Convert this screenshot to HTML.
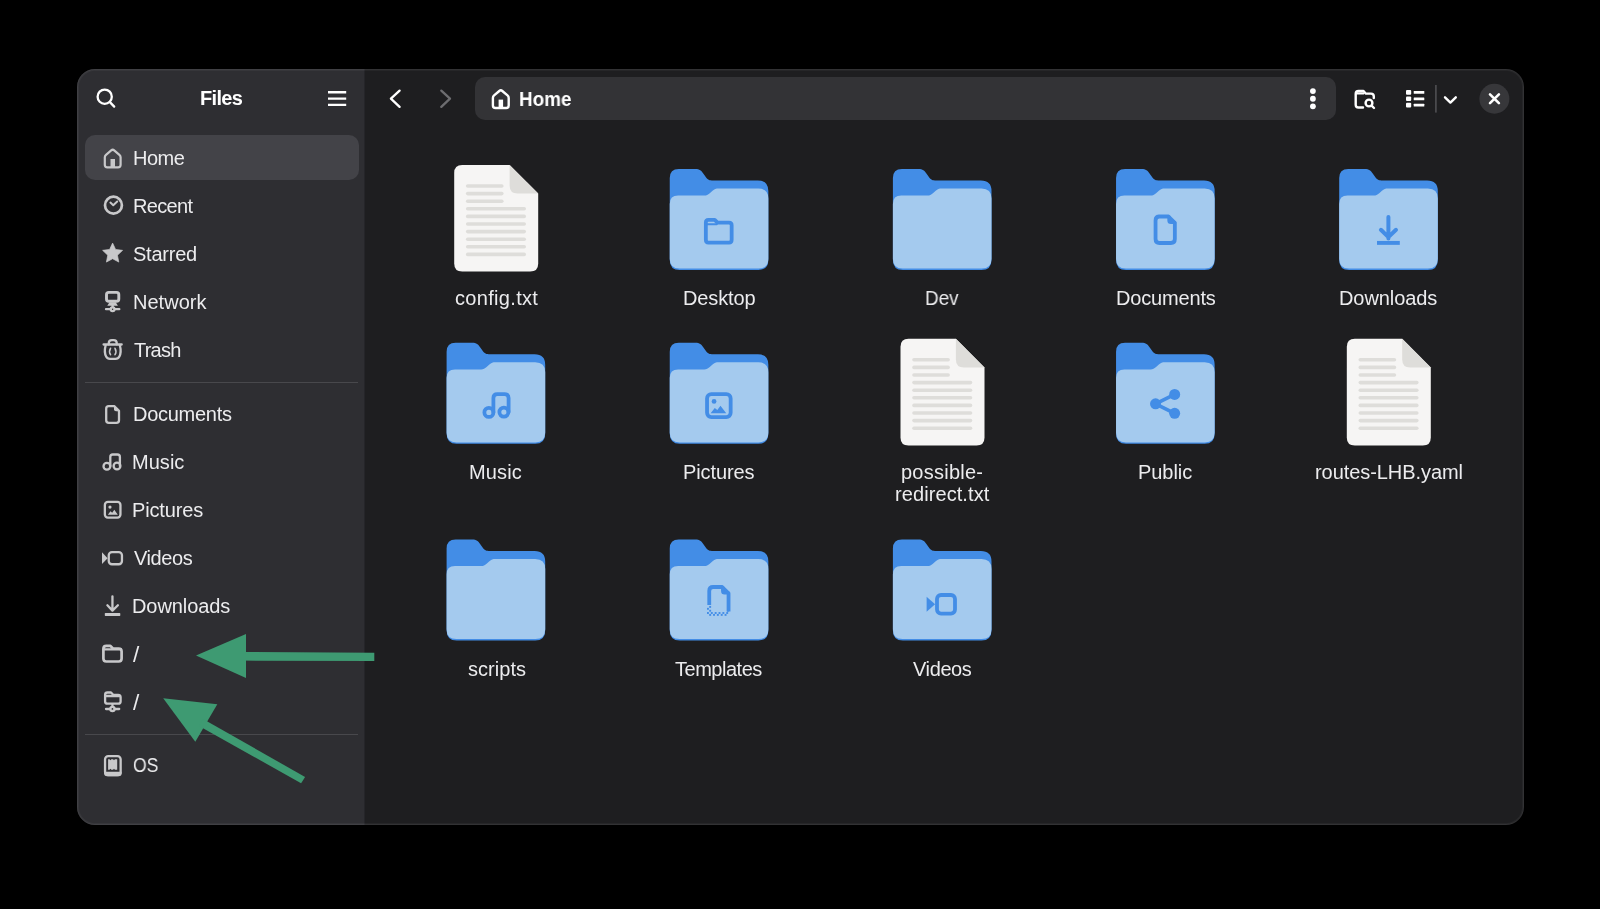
<!DOCTYPE html><html><head><meta charset="utf-8"><style>
html,body{margin:0;padding:0;background:#000;width:1600px;height:909px;overflow:hidden;}.t{position:absolute;white-space:nowrap;line-height:1;font-family:"Liberation Sans", sans-serif;will-change:transform;}.abs{position:absolute;}
</style></head><body>
<div class="abs" style="left:77px;top:69px;width:1447px;height:756px;border-radius:18px;overflow:hidden;background:#1e1e20;"><div class="abs" style="left:0;top:0;width:288px;height:756px;background:#2e2e32;"></div></div>
<div class="abs" style="left:85px;top:135.3px;width:273.5px;height:45.2px;border-radius:10px;background:#434348;"></div>
<div class="abs" style="left:364px;top:69px;width:1px;height:756px;background:rgba(0,0,0,0.18);"></div>
<div class="abs" style="left:474.5px;top:77px;width:861px;height:43px;border-radius:10px;background:#333336;"></div>
<div class="abs" style="left:85px;top:382px;width:273px;height:1px;background:#48484c;"></div>
<div class="abs" style="left:85px;top:734px;width:273px;height:1px;background:#48484c;"></div>
<div class="abs" style="left:77px;top:69px;width:1445px;height:754px;border-radius:18px;border:1px solid rgba(255,255,255,0.09);box-shadow:inset 0 0 0 1px rgba(255,255,255,0.04);"></div>
<svg class="abs" style="left:0;top:0" width="1600" height="909" viewBox="0 0 1600 909">
<g fill="none" stroke="#ffffff" stroke-width="2.3" stroke-linecap="round"><circle cx="104.7" cy="96.7" r="7.1"/><path d="M109.9 102.1 L114.2 106.6"/></g><g stroke="#ffffff" stroke-width="2.4" stroke-linecap="butt"><path d="M328 92.3 H346.2 M328 98.6 H346.2 M328 104.9 H346.2"/></g><path d="M399.6 90.6 L390.9 98.7 L399.6 106.9" fill="none" stroke="#ffffff" stroke-width="2.3" stroke-linecap="round" stroke-linejoin="round"/><path d="M441.3 90.6 L450 98.7 L441.3 106.9" fill="none" stroke="#6d6d70" stroke-width="2.3" stroke-linecap="round" stroke-linejoin="round"/><g transform="translate(491.8,88.6) scale(1.0)"><path d="M1.1 9.3 Q1.1 7.8 2.3 6.8 L7.5 2.4 Q9 1.1 10.5 2.4 L15.7 6.8 Q16.9 7.8 16.9 9.3 V16.8 Q16.9 19.4 14.3 19.4 H3.7 Q1.1 19.4 1.1 16.8 Z" fill="none" stroke="#ffffff" stroke-width="2.4" stroke-linejoin="round"/><rect x="6.8" y="11" width="4.5" height="9" fill="#ffffff"/></g><g fill="#ffffff"><circle cx="1312.9" cy="91.1" r="2.9"/><circle cx="1312.9" cy="98.75" r="2.9"/><circle cx="1312.9" cy="106.35" r="2.9"/></g><g fill="none" stroke="#ffffff" stroke-width="2.4" stroke-linecap="round" stroke-linejoin="round"><path d="M1363 107.5 H1358.5 Q1355.7 107.5 1355.7 104.7 V93.8 Q1355.7 91 1358.5 91 H1363.5 L1365.6 93.6 H1371 Q1373.8 93.6 1373.8 96.4 V98"/><path d="M1356.5 93.4 H1363"/><circle cx="1369" cy="103" r="3.4"/><path d="M1371.6 105.6 L1374 108"/></g><g fill="#ffffff"><rect x="1406" y="90" width="5.2" height="4.7" rx="1"/><rect x="1406" y="96.4" width="5.2" height="4.7" rx="1"/><rect x="1406" y="102.8" width="5.2" height="4.7" rx="1"/><rect x="1413.7" y="91" width="10.6" height="2.8" rx="0.5"/><rect x="1413.7" y="97.4" width="10.6" height="2.8" rx="0.5"/><rect x="1413.7" y="103.8" width="10.6" height="2.8" rx="0.5"/></g><rect x="1435" y="85" width="1.8" height="27.6" fill="#4a4a4d"/><path d="M1445 97.3 L1450.4 102.6 L1455.8 97.3" fill="none" stroke="#ffffff" stroke-width="2.4" stroke-linecap="round" stroke-linejoin="round"/><circle cx="1494.4" cy="98.75" r="15" fill="#37373a"/><path d="M1490 94.3 L1498.9 103.2 M1498.9 94.3 L1490 103.2" stroke="#ffffff" stroke-width="2.6" stroke-linecap="round"/><g transform="translate(103.7,148.0) scale(1.0)"><path d="M1.1 9.3 Q1.1 7.8 2.3 6.8 L7.5 2.4 Q9 1.1 10.5 2.4 L15.7 6.8 Q16.9 7.8 16.9 9.3 V16.8 Q16.9 19.4 14.3 19.4 H3.7 Q1.1 19.4 1.1 16.8 Z" fill="none" stroke="#c8c8ca" stroke-width="2.2" stroke-linejoin="round"/><rect x="6.8" y="11" width="4.5" height="9" fill="#c8c8ca"/></g><g fill="none" stroke="#c8c8ca" stroke-width="2.3" stroke-linecap="round" stroke-linejoin="round"><circle cx="113.45" cy="205.15" r="8.45" stroke-width="2.7"/><path d="M110.4 202.6 L113.25 205.2 L117.2 201.5" stroke-width="2"/><rect x="106.5" y="292.4" width="12.3" height="8.8" rx="2.3" stroke-width="2.9"/><path d="M106 309.2 H110.3 M114.9 309.2 H119.3 M112.6 305 V307"/><circle cx="112.6" cy="309.3" r="1.9"/><path d="M103.6 344.5 H121.7"/><path d="M108.75 344.3 V343.2 Q108.75 340.05 111.9 340.05 H113.6 Q116.75 340.05 116.75 343.2 V344.3"/><path d="M105.6 345.5 C104.7 349 104.8 354 106.1 356.5 Q107.3 358.85 110 358.85 H115.5 Q118.2 358.85 119.4 356.5 C120.7 354 120.8 349 119.9 345.5"/><path d="M108.8 406.1 H114.2 L119 410.9 V420.2 Q119 422.8 116.4 422.8 H108.8 Q106.2 422.8 106.2 420.2 V408.7 Q106.2 406.1 108.8 406.1 Z"/><circle cx="106.9" cy="466.2" r="3.4"/><circle cx="117" cy="466" r="3.4"/><path d="M110.3 466 V457 Q110.3 454.5 112.8 454.5 H117.4 Q119.9 454.5 119.9 457 V466"/><rect x="104.85" y="501.95" width="15.6" height="15.6" rx="3"/><rect x="108.75" y="552.15" width="13.2" height="12.1" rx="3.2"/><path d="M112.45 596.3 V610 M107.4 605.3 L112.45 610.6 L117.9 605.3"/><path d="M103.4 658.6 V648.7 Q103.4 645.8 106.3 645.8 H110.4 L112.9 648.5 H118.7 Q121.6 648.5 121.6 651.4 V658.6 Q121.6 661.5 118.7 661.5 H106.3 Q103.4 661.5 103.4 658.6 Z" stroke-width="2.7"/><path d="M104 649.4 H121"/><path d="M105.1 701.5 V694.8 Q105.1 692.5 107.5 692.5 H111 L113.2 694.8 H118.2 Q120.6 694.8 120.6 697.2 V701.5 Q120.6 703.7 118.2 703.7 H107.5 Q105.1 703.7 105.1 701.5 Z"/><path d="M105.8 696 H120"/><path d="M106 709 H110.2 M114.7 709 H119.2 M112.45 704.5 V706.8"/><circle cx="112.45" cy="708.9" r="2.1"/><rect x="105.05" y="756.05" width="15.6" height="19" rx="3.2"/></g><g fill="#c8c8ca"><path d="M112.60 243.10 L115.60 249.47 L122.59 250.36 L117.45 255.18 L118.77 262.09 L112.60 258.70 L106.43 262.09 L107.75 255.18 L102.61 250.36 L109.60 249.47 Z" stroke="#c8c8ca" stroke-width="0.7" stroke-linejoin="round"/><path d="M109.5 302.2 H115.7 L117.9 305.7 H107.3 Z"/><path d="M110.5 348.3 Q108.6 351.5 110.5 354.7" stroke="#c8c8ca" stroke-width="1.6" fill="none" stroke-linecap="round"/><path d="M115 348.3 Q116.9 351.5 115 354.7" stroke="#c8c8ca" stroke-width="1.6" fill="none" stroke-linecap="round"/><path d="M114 406 L119.2 411.2 H116 Q114 411.2 114 409.2 Z"/><circle cx="110" cy="507.1" r="1.6"/><path d="M107.8 514.8 L110.5 511.2 L112.2 512.8 L114.3 509.8 L117.8 514.8 Z"/><path d="M102 552.3 L107.6 558.2 L102 564.1 Z"/><rect x="104.8" y="613.1" width="15.5" height="2.8" rx="0.6"/><path d="M104.1 771.8 H121.7 V773.2 Q121.7 776.2 118.7 776.2 H107.1 Q104.1 776.2 104.1 773.2 Z"/><path d="M108.1 759.2 L109.5 759.2 L110.4 760.2 L111.3 759.2 L113.1 759.2 L114 760.2 L114.9 759.2 L117.2 759.2 V769.7 L114.9 769.7 L114 768.7 L113.1 769.7 L111.3 769.7 L110.4 768.7 L109.5 769.7 L108.1 769.7 Z"/></g>
<g transform="translate(454.20,165.00)"><path d="M8 0 H55.4 L84 28.6 V98.6 Q84 106.6 76 106.6 H8 Q0 106.6 0 98.6 V8 Q0 0 8 0 Z" fill="#f6f5f4"/><path d="M55.4 0 L84 28.6 H63.4 Q55.4 28.6 55.4 20.6 Z" fill="#deddda"/><rect x="11.7" y="19.20" width="37.7" height="3.6" rx="1.8" fill="#deddda"/><rect x="11.7" y="26.80" width="37.7" height="3.6" rx="1.8" fill="#deddda"/><rect x="11.7" y="34.40" width="37.7" height="3.6" rx="1.8" fill="#deddda"/><rect x="11.7" y="42.00" width="60.1" height="3.6" rx="1.8" fill="#deddda"/><rect x="11.7" y="49.60" width="60.1" height="3.6" rx="1.8" fill="#deddda"/><rect x="11.7" y="57.20" width="60.1" height="3.6" rx="1.8" fill="#deddda"/><rect x="11.7" y="64.80" width="60.1" height="3.6" rx="1.8" fill="#deddda"/><rect x="11.7" y="72.40" width="60.1" height="3.6" rx="1.8" fill="#deddda"/><rect x="11.7" y="80.00" width="60.1" height="3.6" rx="1.8" fill="#deddda"/><rect x="11.7" y="87.60" width="60.1" height="3.6" rx="1.8" fill="#deddda"/></g><g transform="translate(669.75,169.00)"><path d="M0 9 Q0 0 9 0 H25.5 C30 0 31.5 1.5 33.5 4.5 L36 8 C38 10.8 39.5 11.5 43.5 11.5 H88 Q98.6 11.5 98.6 22 V91 Q98.6 101 88.6 101 H10 Q0 101 0 91 Z" fill="#438de6"/><path d="M0 35 Q0 26.6 8.4 26.6 H34.5 C37 26.6 38 26 40 24.3 L42.8 21.8 C44.8 20 46 19.5 49 19.5 H88.6 Q98.6 19.5 98.6 29.5 V89.8 Q98.6 99.6 88.8 99.6 H9.8 Q0 99.6 0 89.8 Z" fill="#a4caee"/></g><g transform="translate(669.75,169.00)" fill="none" stroke="#438de6" stroke-width="3.8" stroke-linecap="round" stroke-linejoin="round"><path d="M36.1 70.8 V53.5 Q36.1 50.9 38.7 50.9 H45 L47.7 53.6 H59.3 Q61.9 53.6 61.9 56.2 V70.8 Q61.9 73.6 59.3 73.6 H38.7 Q36.1 73.6 36.1 70.8 Z"/><path d="M37.5 55.2 H47" stroke-width="2"/></g><g transform="translate(892.90,169.00)"><path d="M0 9 Q0 0 9 0 H25.5 C30 0 31.5 1.5 33.5 4.5 L36 8 C38 10.8 39.5 11.5 43.5 11.5 H88 Q98.6 11.5 98.6 22 V91 Q98.6 101 88.6 101 H10 Q0 101 0 91 Z" fill="#438de6"/><path d="M0 35 Q0 26.6 8.4 26.6 H34.5 C37 26.6 38 26 40 24.3 L42.8 21.8 C44.8 20 46 19.5 49 19.5 H88.6 Q98.6 19.5 98.6 29.5 V89.8 Q98.6 99.6 88.8 99.6 H9.8 Q0 99.6 0 89.8 Z" fill="#a4caee"/></g><g transform="translate(1116.05,169.00)"><path d="M0 9 Q0 0 9 0 H25.5 C30 0 31.5 1.5 33.5 4.5 L36 8 C38 10.8 39.5 11.5 43.5 11.5 H88 Q98.6 11.5 98.6 22 V91 Q98.6 101 88.6 101 H10 Q0 101 0 91 Z" fill="#438de6"/><path d="M0 35 Q0 26.6 8.4 26.6 H34.5 C37 26.6 38 26 40 24.3 L42.8 21.8 C44.8 20 46 19.5 49 19.5 H88.6 Q98.6 19.5 98.6 29.5 V89.8 Q98.6 99.6 88.8 99.6 H9.8 Q0 99.6 0 89.8 Z" fill="#a4caee"/></g><g transform="translate(1116.05,169.00)" fill="none" stroke="#438de6" stroke-width="3.8" stroke-linecap="round" stroke-linejoin="round"><path d="M42.5 47.5 H52.4 L58.8 53.9 V70 Q58.8 74 54.8 74 H43.4 Q39.5 74 39.5 70 V51.4 Q39.5 47.5 43.4 47.5 Z"/><path d="M53 48 V51.6 Q53 53.4 54.8 53.4 H58.5" stroke-width="3.4"/></g><g transform="translate(1339.20,169.00)"><path d="M0 9 Q0 0 9 0 H25.5 C30 0 31.5 1.5 33.5 4.5 L36 8 C38 10.8 39.5 11.5 43.5 11.5 H88 Q98.6 11.5 98.6 22 V91 Q98.6 101 88.6 101 H10 Q0 101 0 91 Z" fill="#438de6"/><path d="M0 35 Q0 26.6 8.4 26.6 H34.5 C37 26.6 38 26 40 24.3 L42.8 21.8 C44.8 20 46 19.5 49 19.5 H88.6 Q98.6 19.5 98.6 29.5 V89.8 Q98.6 99.6 88.8 99.6 H9.8 Q0 99.6 0 89.8 Z" fill="#a4caee"/></g><g transform="translate(1339.20,169.00)" fill="none" stroke="#438de6" stroke-width="3.8" stroke-linecap="round" stroke-linejoin="round"><path d="M49.2 47.9 V69.5 M41.7 60.8 L49.2 68.1 L56.8 60.8" stroke-width="4"/><path d="M37.8 73.9 H60.6" stroke-width="3.9" stroke-linecap="butt"/></g><g transform="translate(446.60,342.80)"><path d="M0 9 Q0 0 9 0 H25.5 C30 0 31.5 1.5 33.5 4.5 L36 8 C38 10.8 39.5 11.5 43.5 11.5 H88 Q98.6 11.5 98.6 22 V91 Q98.6 101 88.6 101 H10 Q0 101 0 91 Z" fill="#438de6"/><path d="M0 35 Q0 26.6 8.4 26.6 H34.5 C37 26.6 38 26 40 24.3 L42.8 21.8 C44.8 20 46 19.5 49 19.5 H88.6 Q98.6 19.5 98.6 29.5 V89.8 Q98.6 99.6 88.8 99.6 H9.8 Q0 99.6 0 89.8 Z" fill="#a4caee"/></g><g transform="translate(446.60,342.80)" fill="none" stroke="#438de6" stroke-width="3.8" stroke-linecap="round" stroke-linejoin="round"><g transform="translate(1.8,0)"><circle cx="40.5" cy="69.6" r="4.5"/><circle cx="55.5" cy="69.3" r="4.5"/><path d="M45 69.4 V55.3 Q45 51.3 49 51.3 H56.2 Q60.2 51.3 60.2 55.3 V69.3"/></g></g><g transform="translate(669.75,342.80)"><path d="M0 9 Q0 0 9 0 H25.5 C30 0 31.5 1.5 33.5 4.5 L36 8 C38 10.8 39.5 11.5 43.5 11.5 H88 Q98.6 11.5 98.6 22 V91 Q98.6 101 88.6 101 H10 Q0 101 0 91 Z" fill="#438de6"/><path d="M0 35 Q0 26.6 8.4 26.6 H34.5 C37 26.6 38 26 40 24.3 L42.8 21.8 C44.8 20 46 19.5 49 19.5 H88.6 Q98.6 19.5 98.6 29.5 V89.8 Q98.6 99.6 88.8 99.6 H9.8 Q0 99.6 0 89.8 Z" fill="#a4caee"/></g><g transform="translate(669.75,342.80)" fill="none" stroke="#438de6" stroke-width="3.8" stroke-linecap="round" stroke-linejoin="round"><rect x="37.3" y="51.4" width="23.6" height="22.9" rx="4.3"/></g><g transform="translate(669.75,342.80)" fill="#438de6"><circle cx="44.3" cy="58.6" r="2.4"/><path d="M40.9 70.4 L45 65.2 L47.6 67.3 L50.7 63 L56.5 70.4 Z"/></g><g transform="translate(900.50,338.80)"><path d="M8 0 H55.4 L84 28.6 V98.6 Q84 106.6 76 106.6 H8 Q0 106.6 0 98.6 V8 Q0 0 8 0 Z" fill="#f6f5f4"/><path d="M55.4 0 L84 28.6 H63.4 Q55.4 28.6 55.4 20.6 Z" fill="#deddda"/><rect x="11.7" y="19.20" width="37.7" height="3.6" rx="1.8" fill="#deddda"/><rect x="11.7" y="26.80" width="37.7" height="3.6" rx="1.8" fill="#deddda"/><rect x="11.7" y="34.40" width="37.7" height="3.6" rx="1.8" fill="#deddda"/><rect x="11.7" y="42.00" width="60.1" height="3.6" rx="1.8" fill="#deddda"/><rect x="11.7" y="49.60" width="60.1" height="3.6" rx="1.8" fill="#deddda"/><rect x="11.7" y="57.20" width="60.1" height="3.6" rx="1.8" fill="#deddda"/><rect x="11.7" y="64.80" width="60.1" height="3.6" rx="1.8" fill="#deddda"/><rect x="11.7" y="72.40" width="60.1" height="3.6" rx="1.8" fill="#deddda"/><rect x="11.7" y="80.00" width="60.1" height="3.6" rx="1.8" fill="#deddda"/><rect x="11.7" y="87.60" width="60.1" height="3.6" rx="1.8" fill="#deddda"/></g><g transform="translate(1116.05,342.80)"><path d="M0 9 Q0 0 9 0 H25.5 C30 0 31.5 1.5 33.5 4.5 L36 8 C38 10.8 39.5 11.5 43.5 11.5 H88 Q98.6 11.5 98.6 22 V91 Q98.6 101 88.6 101 H10 Q0 101 0 91 Z" fill="#438de6"/><path d="M0 35 Q0 26.6 8.4 26.6 H34.5 C37 26.6 38 26 40 24.3 L42.8 21.8 C44.8 20 46 19.5 49 19.5 H88.6 Q98.6 19.5 98.6 29.5 V89.8 Q98.6 99.6 88.8 99.6 H9.8 Q0 99.6 0 89.8 Z" fill="#a4caee"/></g><g transform="translate(1116.05,342.80)" fill="none" stroke="#438de6" stroke-width="3.8" stroke-linecap="round" stroke-linejoin="round"><path d="M58.6 51.6 L39.5 61 L58.6 70.5" stroke-width="3.6"/></g><g transform="translate(1116.05,342.80)" fill="#438de6"><circle cx="58.6" cy="51.6" r="5.5"/><circle cx="39.5" cy="61" r="5.5"/><circle cx="58.6" cy="70.5" r="5.5"/></g><g transform="translate(1346.80,338.80)"><path d="M8 0 H55.4 L84 28.6 V98.6 Q84 106.6 76 106.6 H8 Q0 106.6 0 98.6 V8 Q0 0 8 0 Z" fill="#f6f5f4"/><path d="M55.4 0 L84 28.6 H63.4 Q55.4 28.6 55.4 20.6 Z" fill="#deddda"/><rect x="11.7" y="19.20" width="37.7" height="3.6" rx="1.8" fill="#deddda"/><rect x="11.7" y="26.80" width="37.7" height="3.6" rx="1.8" fill="#deddda"/><rect x="11.7" y="34.40" width="37.7" height="3.6" rx="1.8" fill="#deddda"/><rect x="11.7" y="42.00" width="60.1" height="3.6" rx="1.8" fill="#deddda"/><rect x="11.7" y="49.60" width="60.1" height="3.6" rx="1.8" fill="#deddda"/><rect x="11.7" y="57.20" width="60.1" height="3.6" rx="1.8" fill="#deddda"/><rect x="11.7" y="64.80" width="60.1" height="3.6" rx="1.8" fill="#deddda"/><rect x="11.7" y="72.40" width="60.1" height="3.6" rx="1.8" fill="#deddda"/><rect x="11.7" y="80.00" width="60.1" height="3.6" rx="1.8" fill="#deddda"/><rect x="11.7" y="87.60" width="60.1" height="3.6" rx="1.8" fill="#deddda"/></g><g transform="translate(446.60,539.50)"><path d="M0 9 Q0 0 9 0 H25.5 C30 0 31.5 1.5 33.5 4.5 L36 8 C38 10.8 39.5 11.5 43.5 11.5 H88 Q98.6 11.5 98.6 22 V91 Q98.6 101 88.6 101 H10 Q0 101 0 91 Z" fill="#438de6"/><path d="M0 35 Q0 26.6 8.4 26.6 H34.5 C37 26.6 38 26 40 24.3 L42.8 21.8 C44.8 20 46 19.5 49 19.5 H88.6 Q98.6 19.5 98.6 29.5 V89.8 Q98.6 99.6 88.8 99.6 H9.8 Q0 99.6 0 89.8 Z" fill="#a4caee"/></g><g transform="translate(669.75,539.50)"><path d="M0 9 Q0 0 9 0 H25.5 C30 0 31.5 1.5 33.5 4.5 L36 8 C38 10.8 39.5 11.5 43.5 11.5 H88 Q98.6 11.5 98.6 22 V91 Q98.6 101 88.6 101 H10 Q0 101 0 91 Z" fill="#438de6"/><path d="M0 35 Q0 26.6 8.4 26.6 H34.5 C37 26.6 38 26 40 24.3 L42.8 21.8 C44.8 20 46 19.5 49 19.5 H88.6 Q98.6 19.5 98.6 29.5 V89.8 Q98.6 99.6 88.8 99.6 H9.8 Q0 99.6 0 89.8 Z" fill="#a4caee"/></g><g transform="translate(669.75,539.50)" fill="none" stroke="#438de6" stroke-width="3.8" stroke-linecap="round" stroke-linejoin="round"><path d="M39.5 65.5 V51.4 Q39.5 47.5 43.4 47.5 H52.4 L58.8 53.9 V72" stroke-linecap="butt"/><path d="M53 48 V51.6 Q53 53.4 54.8 53.4 H58.5" stroke-width="3.4"/></g><g transform="translate(669.75,539.50)" fill="#438de6"><rect x="37.25" y="72.55" width="1.9" height="1.9"/><rect x="41.10" y="72.55" width="1.9" height="1.9"/><rect x="44.95" y="72.55" width="1.9" height="1.9"/><rect x="48.80" y="72.55" width="1.9" height="1.9"/><rect x="52.65" y="72.55" width="1.9" height="1.9"/><rect x="56.50" y="72.55" width="1.9" height="1.9"/><rect x="39.45" y="74.45" width="1.9" height="1.9"/><rect x="43.30" y="74.45" width="1.9" height="1.9"/><rect x="47.15" y="74.45" width="1.9" height="1.9"/><rect x="51.00" y="74.45" width="1.9" height="1.9"/><rect x="54.85" y="74.45" width="1.9" height="1.9"/><rect x="39.45" y="70.30" width="1.9" height="1.9"/><rect x="57.25" y="70.30" width="1.9" height="1.9"/><rect x="37.25" y="68.35" width="1.9" height="1.9"/><rect x="39.45" y="66.45" width="1.9" height="1.9"/></g><g transform="translate(892.90,539.50)"><path d="M0 9 Q0 0 9 0 H25.5 C30 0 31.5 1.5 33.5 4.5 L36 8 C38 10.8 39.5 11.5 43.5 11.5 H88 Q98.6 11.5 98.6 22 V91 Q98.6 101 88.6 101 H10 Q0 101 0 91 Z" fill="#438de6"/><path d="M0 35 Q0 26.6 8.4 26.6 H34.5 C37 26.6 38 26 40 24.3 L42.8 21.8 C44.8 20 46 19.5 49 19.5 H88.6 Q98.6 19.5 98.6 29.5 V89.8 Q98.6 99.6 88.8 99.6 H9.8 Q0 99.6 0 89.8 Z" fill="#a4caee"/></g><g transform="translate(892.90,539.50)" fill="none" stroke="#438de6" stroke-width="3.8" stroke-linecap="round" stroke-linejoin="round"><rect x="44.1" y="55.5" width="18" height="18.6" rx="4"/></g><g transform="translate(892.90,539.50)" fill="#438de6"><path d="M33.7 57.2 L42.2 64.7 L33.7 72.3 Z"/></g>
<g fill="#3e9a72"><path d="M196 655.6 L246 634 L246 678.1 Z"/><path d="M240 651.9 L374.3 652.75 L374.3 660.9 L240 660.6 Z"/><path d="M163.2 698.2 L217.3 704.2 L195.3 741.8 Z"/><path d="M203 719 L305.1 777 L301.1 783.2 L199 726 Z"/></g>
</svg>
<div class="t" style="left:199.66px;top:88.30px;font-size:20px;font-weight:700;color:#ffffff;letter-spacing:-0.654px">Files</div>
<div class="t" style="left:519.24px;top:88.50px;font-size:20px;font-weight:700;color:#ffffff;transform:scaleX(0.9431);transform-origin:0 0">Home</div>
<div class="t" style="left:133.06px;top:147.60px;font-size:20px;font-weight:400;color:#ececee;letter-spacing:-0.507px">Home</div>
<div class="t" style="left:132.76px;top:195.60px;font-size:20px;font-weight:400;color:#ececee;letter-spacing:-0.656px">Recent</div>
<div class="t" style="left:133.49px;top:243.60px;font-size:20px;font-weight:400;color:#ececee;letter-spacing:-0.231px">Starred</div>
<div class="t" style="left:132.76px;top:291.60px;font-size:20px;font-weight:400;color:#ececee;letter-spacing:0.027px">Network</div>
<div class="t" style="left:133.95px;top:339.60px;font-size:20px;font-weight:400;color:#ececee;letter-spacing:-0.769px">Trash</div>
<div class="t" style="left:133.21px;top:404.00px;font-size:20px;font-weight:400;color:#ececee;letter-spacing:-0.267px">Documents</div>
<div class="t" style="left:132.46px;top:452.00px;font-size:20px;font-weight:400;color:#ececee;letter-spacing:0.035px">Music</div>
<div class="t" style="left:132.46px;top:500.00px;font-size:20px;font-weight:400;color:#ececee;letter-spacing:-0.140px">Pictures</div>
<div class="t" style="left:134.01px;top:548.00px;font-size:20px;font-weight:400;color:#ececee;letter-spacing:-0.408px">Videos</div>
<div class="t" style="left:132.46px;top:596.00px;font-size:20px;font-weight:400;color:#ececee;letter-spacing:-0.085px">Downloads</div>
<div class="t" style="left:133.42px;top:755.00px;font-size:20px;font-weight:400;color:#ececee;transform:scaleX(0.8786);transform-origin:0 0">OS</div>
<div class="t" style="left:132.90px;top:644.17px;font-size:22.5px;font-weight:400;color:#ececee;letter-spacing:0.000px">/</div>
<div class="t" style="left:132.90px;top:692.17px;font-size:22.5px;font-weight:400;color:#ececee;letter-spacing:0.000px">/</div>
<div class="t" style="left:454.75px;top:287.80px;font-size:20px;font-weight:400;color:#ececee;letter-spacing:0.317px">config.txt</div>
<div class="t" style="left:682.76px;top:287.80px;font-size:20px;font-weight:400;color:#ececee;letter-spacing:-0.115px">Desktop</div>
<div class="t" style="left:925.05px;top:287.80px;font-size:20px;font-weight:400;color:#ececee;transform:scaleX(0.9451);transform-origin:0 0">Dev</div>
<div class="t" style="left:1115.56px;top:287.80px;font-size:20px;font-weight:400;color:#ececee;letter-spacing:-0.161px">Documents</div>
<div class="t" style="left:1339.26px;top:287.80px;font-size:20px;font-weight:400;color:#ececee;letter-spacing:-0.085px">Downloads</div>
<div class="t" style="left:469.36px;top:462.00px;font-size:20px;font-weight:400;color:#ececee;letter-spacing:0.135px">Music</div>
<div class="t" style="left:683.46px;top:462.00px;font-size:20px;font-weight:400;color:#ececee;letter-spacing:-0.098px">Pictures</div>
<div class="t" style="left:901.41px;top:462.00px;font-size:20px;font-weight:400;color:#ececee;letter-spacing:0.242px">possible-</div>
<div class="t" style="left:895.17px;top:484.00px;font-size:20px;font-weight:400;color:#ececee;letter-spacing:0.083px">redirect.txt</div>
<div class="t" style="left:1138.26px;top:462.00px;font-size:20px;font-weight:400;color:#ececee;letter-spacing:-0.061px">Public</div>
<div class="t" style="left:1315.37px;top:462.00px;font-size:20px;font-weight:400;color:#ececee;letter-spacing:-0.069px">routes-LHB.yaml</div>
<div class="t" style="left:467.64px;top:658.60px;font-size:20px;font-weight:400;color:#ececee;letter-spacing:0.033px">scripts</div>
<div class="t" style="left:675.05px;top:658.60px;font-size:20px;font-weight:400;color:#ececee;letter-spacing:-0.475px">Templates</div>
<div class="t" style="left:913.31px;top:658.60px;font-size:20px;font-weight:400;color:#ececee;letter-spacing:-0.388px">Videos</div>
</body></html>
